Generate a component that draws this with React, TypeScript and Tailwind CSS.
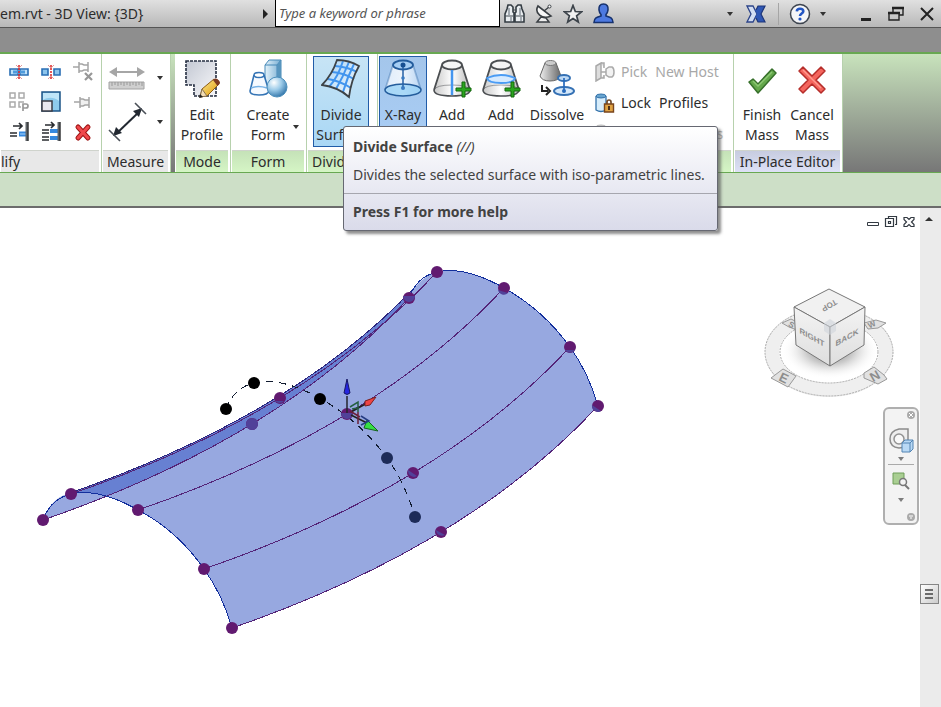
import React from "react";

interface IconProps {
  children: React.ReactNode;
  w?: number;
  h?: number;
}

const Icon = ({ children, w = 22, h = 22 }: IconProps) => (
  <svg
    width={w}
    height={h}
    viewBox={`0 0 ${w} ${h}`}
    fill="none"
    aria-hidden="true"
    className="shrink-0"
  >
    {children}
  </svg>
);

const Caret = ({ fill = "#333" }: { fill?: string }) => (
  <Icon w={8} h={6}>
    <path d="M1 1h6L4 5z" fill={fill} />
  </Icon>
);

/* ---------- title bar icons ---------- */

const Binoculars = () => (
  <Icon w={21} h={20}>
    <path
      d="M4 1h3l2 2v5l1 1v9H1v-8l2-5zM17 1h-3l-2 2v5l-1 1v9h9v-8l-2-5z"
      fill="#e9edf0"
      stroke="#333b42"
      strokeWidth="1.6"
    />
    <path d="M9 6h3M1 12h8M12 12h8" stroke="#454c53" strokeWidth="1.2" />
    <path d="M5 4v7M16 4v7M7 13v4M17 13v4" stroke="#8b939a" strokeWidth="1.5" />
  </Icon>
);

const Dish = () => (
  <Icon w={18} h={20}>
    <path d="M6 13l-4 5h12l-3-4z" fill="#eee" stroke="#3a3f44" strokeWidth="1.5" />
    <path d="M3 2C-1 9 7 16 16 12z" fill="#f7f7f7" stroke="#3a3f44" strokeWidth="1.6" />
    <path d="M9 7l5-4" stroke="#3a3f44" strokeWidth="1.5" />
    <circle cx="14.500" cy="2.500" r="1.500" fill="#fff" stroke="#3a3f44" />
  </Icon>
);

const Star = () => (
  <Icon w={20} h={20}>
    <path
      d="M10 1.500l2.300 6 6.200.3-4.900 4 1.700 6.200L10 14.500 4.700 18l1.700-6.200-4.900-4 6.200-.3z"
      fill="#f1f1f1"
      stroke="#3c434a"
      strokeWidth="1.700"
    />
  </Icon>
);

const User = () => (
  <Icon w={21} h={21}>
    <path
      d="M10.500 1C7 1 5.500 3.500 6 7c.3 2.500 1 3.500 2 4.500V13c-4 1-7 2-7 6.500h19C20 15 17 14 13 13v-1.500c1-1 1.700-2 2-4.500.5-3.500-1-6-4.500-6z"
      fill="#4d79e0"
      stroke="#17326e"
      strokeWidth="1.600"
    />
  </Icon>
);

const ExchangeLogo = () => (
  <Icon w={20} h={18}>
    <path d="M19 1h-7L8 9l4 8h7l-4-8z" fill="#2f57b4" stroke="#1d3579" strokeWidth="1.200" />
    <path d="M1 1h6l4 8-4 8H1l4-8z" fill="#d3def3" stroke="#2c4489" strokeWidth="1.300" />
    <path d="M9 5l2 4-2 4h3l2-4-2-4z" fill="#2f57b4" />
  </Icon>
);

const Help = () => (
  <Icon w={22} h={22}>
    <circle cx="11" cy="11" r="9.500" fill="#f4f5f8" stroke="#3d444f" strokeWidth="1.500" />
    <path
      d="M7.800 8.300C8 6.500 9.200 5.700 11 5.700s3.300 1 3.300 2.600c0 2.200-3.300 2.300-3.300 4.700"
      stroke="#2356c4"
      strokeWidth="2.600"
    />
    <circle cx="11" cy="16" r="1.600" fill="#2356c4" />
  </Icon>
);

/* ---------- ribbon icons ---------- */

const SplitElement = () => (
  <Icon>
    <path d="M2 8h8v6H2zM12 8h8v6h-8z" fill="#bfe0f7" stroke="#2a6fb5" strokeWidth="1.600" />
    <path d="M5 11h12" stroke="#4f9bdc" strokeWidth="3" />
    <path d="M11 4v14" stroke="#d22" strokeWidth="1.500" strokeDasharray="2 1" />
    <path d="M8 4l3 3 3-3M8 18l3-3 3 3" stroke="#e39a9a" />
  </Icon>
);

const SplitGap = () => (
  <Icon>
    <path d="M2 8h6v6H2zM14 8h6v6h-6z" fill="#8cc4ec" stroke="#2a6fb5" strokeWidth="1.600" />
    <path d="M11 4v14" stroke="#d22" strokeWidth="1.500" strokeDasharray="2 1" />
    <path d="M8 4l3 3 3-3M8 18l3-3 3 3" stroke="#e39a9a" />
  </Icon>
);

const Pin = () => (
  <Icon>
    <path d="M8 8h3l2 1h4v5h-4l-2 1H8z" fill="#f0f0f0" />
    <path
      d="M2 11h6M8 6v11M8 8h3l2 1h4M8 15h3l2-1h4M17 6v11"
      stroke="#a5a5a5"
      strokeWidth="1.500"
    />
  </Icon>
);

const Unpin = () => (
  <Icon>
    <path d="M1 6h6M7 1v11M7 3h3l2 1h4M7 10h3l2-1h4M16 1v10" stroke="#a5a5a5" strokeWidth="1.500" />
    <path d="M13 12l7 7M20 12l-7 7" stroke="#979797" strokeWidth="2.200" />
  </Icon>
);

const ArrayPattern = () => (
  <Icon>
    <path d="M2 2h5v5H2zM11 2h5v5h-5zM2 11h5v5H2zM16 11h-5v5h2" stroke="#aaa" strokeWidth="1.500" />
    <path d="M15 20v-7h3a2 2 0 010 4h-3" stroke="#999" strokeWidth="1.700" />
  </Icon>
);

const Scale = () => (
  <Icon>
    <path d="M2 1h18v19H2z" fill="#8ecbec" stroke="#1c5487" strokeWidth="1.500" />
    <path d="M3 2h16v8C14 6 8 6 3 9z" fill="#bfe5f8" />
    <path d="M2 10h10v10H2z" fill="#e8e8f0" stroke="#3c3c44" strokeWidth="1.500" />
  </Icon>
);

const TrimSingle = () => (
  <Icon>
    <path d="M5 5h9M11 2l3 3-3 3" stroke="#2a2d31" strokeWidth="1.700" />
    <path d="M2 12h7M2 15h7" stroke="#2a2d31" strokeWidth="1.500" />
    <path d="M11 13h7" stroke="#3689de" strokeWidth="5" />
    <path d="M12 13h6" stroke="#a9d6ff" />
    <path d="M19 1v19" stroke="#5d6267" strokeWidth="3" />
    <path d="M20 1v19" stroke="#222" />
  </Icon>
);

const TrimMultiple = () => (
  <Icon>
    <path d="M5 4h9M11 1l3 3-3 3" stroke="#2a2d31" strokeWidth="1.700" />
    <path d="M2 9h7M2 12h7M2 16h7M2 19h7" stroke="#2a2d31" strokeWidth="1.500" />
    <path d="M10 10h8M10 17h8" stroke="#3689de" strokeWidth="4" />
    <path d="M19 1v19" stroke="#5d6267" strokeWidth="3" />
    <path d="M20 1v19" stroke="#222" />
  </Icon>
);

const Delete = () => (
  <Icon>
    <path d="M6 6l10 11M16 6L6 17" stroke="#9e1515" strokeWidth="5" strokeLinecap="round" />
    <path d="M6 6l10 11M16 6L6 17" stroke="#f0484b" strokeWidth="3" strokeLinecap="round" />
  </Icon>
);

const MeasureLength = () => (
  <Icon w={38} h={28}>
    <path d="M3 8h32" stroke="#a6a6a6" strokeWidth="2" />
    <path d="M1 8l8-5v10zM37 8l-8-5v10z" fill="#a6a6a6" />
    <path d="M1 18h35v7H1z" fill="#cfcfcf" stroke="#a2a2a2" />
    <path d="M4 18v4M7 18v3M10 18v4M13 18v3M16 18v4M19 18v3M22 18v4M25 18v3M28 18v4M31 18v3M34 18v4" stroke="#999" />
  </Icon>
);

const AlignedDimension = () => (
  <Icon w={40} h={40}>
    <path d="M8 32L32 9" stroke="#222831" strokeWidth="2" />
    <path d="M5 34l3-9 6 6zM34 6l-3 9-6-6z" fill="#222831" />
    <path d="M1 28l11 11M27 1l11 11" stroke="#4a5058" strokeWidth="1.600" />
  </Icon>
);

const EditProfileIcon = () => (
  <Icon w={40} h={40}>
    <defs>
      <linearGradient id="profile" x1="0" y1="0" x2="1" y2="1">
        <stop offset="0" stopColor="#c3c8d3" />
        <stop offset="1" stopColor="#f8f8fa" />
      </linearGradient>
      <linearGradient id="pencil" x1="0" y1="0" x2="1" y2="1">
        <stop offset="0" stopColor="#fff09a" />
        <stop offset="1" stopColor="#dc9300" />
      </linearGradient>
    </defs>
    <path
      d="M4 2h30v35H12V26H4z"
      fill="url(#profile)"
      stroke="#262f41"
      strokeWidth="1.600"
      strokeDasharray="3 1"
    />
    <path d="M18 38l2-8L32 20l5 5-12 12z" fill="url(#pencil)" stroke="#8d5b12" />
    <path d="M18 38l2-8 5 7z" fill="#f2dcb4" stroke="#8a7350" />
    <path d="M17 39l1-4 3 3z" fill="#222" />
    <path d="M31 21l2-1.500q2-.5 4 2t0 4l-1.500 1.500z" fill="#7d3b23" />
  </Icon>
);

const CreateFormIcon = () => (
  <Icon w={40} h={40}>
    <defs>
      <radialGradient id="sphere" cx="35%" cy="28%" r="75%">
        <stop offset="0" stopColor="#fff" />
        <stop offset="0.500" stopColor="#9ccbe9" />
        <stop offset="1" stopColor="#3477ab" />
      </radialGradient>
      <linearGradient id="box">
        <stop offset="0" stopColor="#e3f2fa" />
        <stop offset="1" stopColor="#77add2" />
      </linearGradient>
    </defs>
    <path d="M17 6l4-5h12v23l-4 4H17z" fill="url(#box)" stroke="#4689b8" />
    <path d="M17 6h12l4-5M29 6v22" stroke="#4689b8" />
    <path d="M29 6l4-5v23l-4 4z" fill="#5795be" />
    <path d="M6 16q5-3 10 0l5 17q-9 6-19 0z" fill="#f5faff" fillOpacity=".95" />
    <path d="M6 16L2 32q0 4 9 4t10-4l-5-16" stroke="#3474b5" strokeWidth="1.600" />
    <ellipse cx="11" cy="16" rx="5" ry="2.500" fill="#fff" stroke="#3474b5" strokeWidth="1.500" />
    <path d="M3 29q7-3 16 0" stroke="#79b3e6" strokeWidth="1.500" />
    <circle cx="29" cy="28" r="10" fill="url(#sphere)" stroke="#4c8fbc" />
  </Icon>
);

const DivideIcon = () => (
  <Icon w={40} h={40}>
    <defs>
      <linearGradient id="grid" x1="0" y1="0" x2="1" y2="1">
        <stop offset="0" stopColor="#a9d4f5" />
        <stop offset="1" stopColor="#f2f9fe" />
      </linearGradient>
    </defs>
    <path d="M16 1Q28 1 38 7Q30 21 28 38Q17 28 1 26Q11 16 16 1z" fill="url(#grid)" />
    <path
      d="M22 2Q17 18 8 28M28 3Q22 18 15 30M33 5Q26 19 22 33M14 7q13 1 22 6M11 13q12 1 22 7M7 20q12 2 23 9"
      stroke="#4295ee"
      strokeWidth="2"
    />
    <path d="M16 1Q28 1 38 7Q30 21 28 38Q17 28 1 26Q11 16 16 1z" stroke="#3e4347" strokeWidth="1.800" />
  </Icon>
);

const Frustum = ({ stroke = "#4b4e51", mode }: { stroke?: string; mode: "xray" | "edge" | "profile" }) => (
  <Icon w={40} h={40}>
    <defs>
      <linearGradient id={`cone-${mode}`}>
        <stop offset="0" stopColor={mode === "xray" ? "#edf5ff" : "#bcbcbc"} />
        <stop offset="0.500" stopColor="#fff" />
        <stop offset="1" stopColor={mode === "xray" ? "#bdd8f5" : "#aaa"} />
      </linearGradient>
    </defs>
    <path d="M10 6L2 31q0 6 18 6t18-6L30 6z" fill={`url(#cone-${mode})`} fillOpacity=".8" />
    <path d="M10 6L2 31M30 6l8 25" stroke={stroke} strokeWidth="1.800" strokeOpacity={mode === "xray" ? "0.350" : "1"} />
    {mode === "xray" ? (
      <ellipse cx="20" cy="31" rx="18" ry="6" stroke={stroke} strokeWidth="1.500" fill="#8ecdf5" fillOpacity=".7" />
    ) : (
      <>
        <path d="M2 31q0 6 18 6t18-6" stroke={stroke} strokeWidth="1.600" />
        <path d="M2 31q2-5 18-5t18 5" stroke={stroke} strokeOpacity=".5" />
      </>
    )}
    <ellipse cx="20" cy="6" rx="10" ry="4.500" fill={mode === "xray" ? "#a5cdf3" : "#f5f5f5"} stroke={stroke} strokeWidth="1.800" />
    {mode === "xray" && (
      <>
        <path d="M20 6v24" stroke="#245fa4" strokeWidth="1.500" />
        <circle cx="20" cy="6" r="2.500" fill="#174f91" />
        <circle cx="20" cy="19" r="1.800" fill="#397ac1" />
        <circle cx="20" cy="29" r="2" fill="#397ac1" />
      </>
    )}
    {mode === "edge" && <path d="M20 11v25" stroke="#4596ef" strokeWidth="2.500" />}
    {mode === "profile" && <path d="M6 19q14-6 28 0-1 5-14 5T6 19z" fill="#d6eaff" stroke="#4b9cf4" strokeWidth="1.800" />}
    {mode !== "xray" && (
      <path d="M30 23h3v6h6v3h-6v6h-3v-6h-6v-3h6z" fill="#2aa51e" stroke="#13680c" />
    )}
  </Icon>
);

const DissolveIcon = () => (
  <Icon w={40} h={40}>
    <defs>
      <linearGradient id="dissolve">
        <stop offset="0" stopColor="#eee" />
        <stop offset="1" stopColor="#686868" />
      </linearGradient>
    </defs>
    <path d="M8 4L3 17q2 5 10 5t11-5L19 4z" fill="url(#dissolve)" stroke="#666" />
    <ellipse cx="13.500" cy="4" rx="5.500" ry="2.500" fill="#ccc" stroke="#777" />
    <path d="M5 26v6h6M9 28l4 4-4 4" stroke="#222" strokeWidth="2" />
    <ellipse cx="27" cy="19" rx="6" ry="3" fill="#bdd9f4" stroke="#3571b4" strokeWidth="2" />
    <ellipse cx="27" cy="32" rx="10" ry="4" fill="#d5e8fa" stroke="#3571b4" strokeWidth="2" />
    <path d="M27 19v13" stroke="#286bbd" strokeWidth="1.700" />
    <circle cx="27" cy="32" r="2" fill="#286bbd" />
  </Icon>
);

const PickHostIcon = () => (
  <Icon w={20} h={20}>
    <path d="M1 4l5-3v15l-5 3zM6 1h3v5M6 16h3v-3" fill="#ddd" stroke="#a9a9a9" strokeWidth="1.500" />
    <path d="M6 10h5" stroke="#aaa" strokeWidth="1.500" />
    <path d="M11 7l3-2h3q2 1 2 5t-2 5h-3l-3-2z" fill="#f2f2f2" stroke="#aaa" strokeWidth="1.500" />
  </Icon>
);

const LockIcon = ({ muted = false }: { muted?: boolean }) => (
  <Icon w={20} h={20}>
    <path d="M1 3v14q5 3 10 0V3" fill={muted ? "#ddd" : "#d7edfb"} stroke={muted ? "#bbb" : "#3472aa"} strokeWidth="1.300" />
    <ellipse cx="6" cy="3" rx="5" ry="2" fill={muted ? "#ccc" : "#67a4cf"} stroke={muted ? "#bbb" : "#3472aa"} />
    <path d="M12 11V9q0-2 2-2t2 2v2" stroke={muted ? "#aaa" : "#704b2a"} strokeWidth="1.700" />
    <path d="M9.500 11h9v8h-9z" fill={muted ? "#ccc" : "#e0a343"} stroke={muted ? "#aaa" : "#79451c"} strokeWidth="1.400" />
    <path d="M14 13v4" stroke={muted ? "#999" : "#4d3018"} strokeWidth="2" />
  </Icon>
);

const FinishIcon = () => (
  <Icon w={40} h={40}>
    <path d="M7 23l4-3 5 5L30 10l4 4-18 20z" fill="#64a84b" stroke="#37702b" strokeWidth="1.500" strokeLinejoin="round" />
    <path d="M11 22l5 5 14-14" stroke="#8cc873" strokeWidth="1.500" />
  </Icon>
);

const CancelIcon = () => (
  <Icon w={40} h={40}>
    <path
      d="M7 12l4-4 9 9 9-9 4 4-9 9 9 9-4 4-9-9-9 9-4-4 9-9z"
      fill="#f4655d"
      stroke="#b52d2a"
      strokeWidth="1.500"
      strokeLinejoin="round"
    />
    <path d="M11 11l18 18" stroke="#ff9a8e" strokeWidth="1.500" />
  </Icon>
);

/* ---------- ribbon pieces ---------- */

const tones = {
  gray: "bg-[#e8e8e8]",
  green: "bg-linear-to-b from-[#c5e2b8] to-[#d5f5c5]",
  blue: "bg-linear-to-b from-[#c7cce0] to-[#dde1f6]",
};

interface PanelProps {
  title?: string;
  tone?: keyof typeof tones;
  className?: string;
  labelClass?: string;
  children: React.ReactNode;
}

const Panel = ({ title, tone = "green", className = "", labelClass = "text-center", children }: PanelProps) => (
  <section className={`flex shrink-0 flex-col border-r border-[#b7d1ad] bg-white pr-px ${className}`}>
    <div className="flex h-24 items-start">{children}</div>
    <h2 className={`mx-px h-[22px] border-t border-[#cfd3cc] leading-[22px] whitespace-nowrap ${tones[tone]} ${labelClass}`}>
      {title}
    </h2>
  </section>
);

interface ToolProps {
  icon: React.ReactNode;
  lines: string[];
  className?: string;
  caret?: boolean;
}

const Tool = ({ icon, lines, className = "", caret = false }: ToolProps) => (
  <button
    type="button"
    className={`relative mt-0.5 flex h-[91px] shrink-0 flex-col items-center border pt-0.5 leading-5 ${className}`}
  >
    <span className="mb-1.5">{icon}</span>
    {lines.map((line) => (
      <span key={line} className="whitespace-nowrap">
        {line}
      </span>
    ))}
    {caret && (
      <span className="absolute right-1 bottom-4">
        <Caret />
      </span>
    )}
  </button>
);

const modifyTools = [
  { label: "Split Element", icon: <SplitElement /> },
  { label: "Split with Gap", icon: <SplitGap /> },
  { label: "Unpin", icon: <Unpin /> },
  { label: "Array", icon: <ArrayPattern /> },
  { label: "Scale", icon: <Scale /> },
  { label: "Pin", icon: <Pin /> },
  { label: "Trim Single", icon: <TrimSingle /> },
  { label: "Trim Multiple", icon: <TrimMultiple /> },
  { label: "Delete", icon: <Delete /> },
];

const TitleBar = () => (
  <header className="flex h-7 items-center border-b border-[#555] bg-linear-to-b from-[#e0e0e0] to-[#b8b8b8]">
    <h1 className="w-[259px] truncate">em.rvt - 3D View: {"{3D}"}</h1>
    <button type="button" aria-label="Expand search" className="w-4 pl-[3px]">
      <Icon w={8} h={12}>
        <path d="M1 1v10l5-5z" fill="#222" />
      </Icon>
    </button>
    <input
      type="text"
      aria-label="Search"
      placeholder="Type a keyword or phrase"
      className="h-[27px] w-[225px] border border-t-0 border-black bg-white px-[3px] text-[13px] italic placeholder:text-[#555] placeholder:opacity-100"
    />
    <div className="flex items-center gap-2.5 pl-1">
      <button type="button" aria-label="Find"><Binoculars /></button>
      <button type="button" aria-label="Subscription"><Dish /></button>
      <button type="button" aria-label="Favorites"><Star /></button>
      <button type="button" aria-label="Sign in"><User /></button>
    </div>
    <div className="ml-auto flex items-center pr-1.5">
      <button type="button" aria-label="Account menu"><Caret /></button>
      <button type="button" aria-label="Exchange" className="mx-3"><ExchangeLogo /></button>
      <span className="h-[22px] w-px bg-[#a5a5a5]" />
      <button type="button" aria-label="Help" className="ml-2.5"><Help /></button>
      <button type="button" aria-label="Help menu" className="ml-2 mr-8"><Caret /></button>
      <button type="button" aria-label="Minimize">
        <Icon w={14} h={16}>
          <path d="M2 12h10v3H2z" fill="#222" />
        </Icon>
      </button>
      <button type="button" aria-label="Restore" className="mx-3.5">
        <Icon w={18} h={16}>
          <path d="M6 6V2h10v7h-4M2 7h10v7H2z" stroke="#222" strokeWidth="1.400" />
          <path d="M5 2h12M1 7h12" stroke="#222" strokeWidth="2.500" />
        </Icon>
      </button>
      <button type="button" aria-label="Close">
        <Icon w={16} h={16}>
          <path d="M2 2l12 12M14 2L2 14" stroke="#222" strokeWidth="2" />
        </Icon>
      </button>
    </div>
  </header>
);

const Tooltip = () => (
  <div
    role="tooltip"
    className="absolute top-[72px] left-[343px] z-10 w-[375px] rounded-[3px] border border-[#666872] bg-linear-to-b from-white to-[#dadbea] text-[#424242] shadow-[3px_3px_3px_#555a]"
  >
    <div className="border-b border-[#a6a6ae] px-[9px] pt-1.5 pb-1">
      <p className="leading-7">
        <strong>Divide Surface</strong> <em>(//)</em>
      </p>
      <p className="leading-7 whitespace-nowrap">
        Divides the selected surface with iso-parametric lines.
      </p>
    </div>
    <p className="px-[9px] leading-9 font-bold">Press F1 for more help</p>
  </div>
);

const Ribbon = () => (
  <div className="relative flex border-t-2 border-b border-[#68a852] bg-linear-to-b from-[#c8e3bc] to-[#777]">
    <Panel title="lify" tone="gray" className="w-[102px]" labelClass="text-left">
      <div className="grid grid-cols-3 gap-x-2.5 gap-y-2 pt-[7px] pl-2">
        {modifyTools.map((tool) => (
          <button key={tool.label} type="button" aria-label={tool.label}>
            {tool.icon}
          </button>
        ))}
      </div>
    </Panel>

    <Panel title="Measure" tone="gray" className="w-[69px]">
      <div className="flex flex-col gap-2.5 pt-2.5 pl-1.5">
        <button type="button" aria-label="Measure" className="flex items-center gap-2.5">
          <MeasureLength />
          <Caret />
        </button>
        <button type="button" aria-label="Aligned Dimension" className="flex items-center gap-2">
          <AlignedDimension />
          <Caret />
        </button>
      </div>
    </Panel>

    <Panel title="Mode" className="ml-1 w-14">
      <Tool icon={<EditProfileIcon />} lines={["Edit", "Profile"]} className="w-full border-transparent" />
    </Panel>

    <Panel title="Form" className="w-[76px]">
      <Tool icon={<CreateFormIcon />} lines={["Create", "Form"]} className="w-full border-transparent" caret />
    </Panel>

    <Panel title="Divide Surface" className="w-[71px]" labelClass="pl-1">
      <Tool
        icon={<DivideIcon />}
        lines={["Divide", "Surface"]}
        className="ml-1.5 w-14 border-[#215ca8] bg-linear-to-b from-[#c7e4f5] to-[#a9d7f5]"
      />
    </Panel>

    <Panel className="w-[356px]">
      <Tool
        icon={<Frustum mode="xray" stroke="#235c9c" />}
        lines={["X-Ray"]}
        className="ml-px w-12 border-[#215ca8] bg-linear-to-b from-[#a4c6eb] to-[#a9cdf5]"
      />
      <Tool icon={<Frustum mode="edge" />} lines={["Add"]} className="w-[50px] border-transparent" />
      <Tool icon={<Frustum mode="profile" />} lines={["Add"]} className="w-12 border-transparent" />
      <Tool icon={<DissolveIcon />} lines={["Dissolve"]} className="w-16 border-transparent" />
      <ul className="flex flex-col gap-[11px] pt-2 pl-1.5 leading-5">
        <li>
          <button type="button" disabled className="flex items-center text-[#a8a8a8]">
            <PickHostIcon />
            <span className="ml-1.5">Pick</span>
            <span className="ml-2">New Host</span>
          </button>
        </li>
        <li>
          <button type="button" className="flex items-center">
            <LockIcon />
            <span className="ml-1.5">Lock</span>
            <span className="ml-2">Profiles</span>
          </button>
        </li>
        <li>
          <button type="button" disabled className="flex items-center text-[#b5b5b5]">
            <LockIcon muted />
            <span className="ml-1.5">Unlock</span>
            <span className="ml-2">Profiles</span>
          </button>
        </li>
      </ul>
    </Panel>

    <Panel title="In-Place Editor" tone="blue" className="w-[109px]">
      <Tool icon={<FinishIcon />} lines={["Finish", "Mass"]} className="ml-0.5 w-[52px] border-transparent" />
      <Tool icon={<CancelIcon />} lines={["Cancel", "Mass"]} className="w-12 border-transparent" />
    </Panel>

    <Tooltip />
  </div>
);

/* ---------- drawing area ---------- */

// node offsets along one profile, shared by both ends and the middle
const profile = [
  [0, 0],
  [28, -26],
  [95, -10],
  [161, 49],
  [189, 108],
];
const origins = [
  [43, 312],
  [252, 216],
  [409, 90],
];
const black = [
  [226, 201],
  [254, 175],
  [320, 191],
];

const SurfaceDrawing = () => (
  <svg width="640" height="440" viewBox="0 0 640 440" fill="none" role="img" aria-label="Lofted surface" className="absolute top-0 left-0">
    <g fill="#3e5fc6" fillOpacity=".543">
      <path d="M43 312C48 298 57 289 67 286Q294 208 416 78C412 82 410 86 409 90Q278 231 43 312z" />
      <path d="M67 286Q294 208 416 78C422 71 429 66 437 64C459 59 483 68 504 80C531 95 554 117 570 139C583 157 592 177 598 198Q467 339 232 420C226 399 217 379 204 361C188 338 165 316 138 302C117 290 91 281 67 286z" />
    </g>
    <g shapeRendering="crispEdges">
      {profile.map(([x, y]) => (
        <path key={x} d={`M${43 + x} ${312 + y}q235-81 366-222`} stroke="#542478" />
      ))}
      <path d="M67 286Q294 208 416 78" stroke="#2d267f" />
      <path d="M43 312c5-14 15-23 28-26 22-5 46 4 67 16 27 14 50 36 66 59 13 18 22 38 28 59" stroke="#132f9c" />
      <path d="M409 90c5-14 15-23 28-26 22-5 46 4 67 16 27 15 50 37 66 59 13 18 22 38 28 59" stroke="#132f9c" />
      <path
        d="M226 201c5-14 15-23 28-26 22-5 46 4 67 16 27 15 50 37 66 59 13 18 22 38 28 59"
        stroke="#111b30"
        strokeDasharray="7 6"
      />
    </g>
    {origins.map(([ox, oy]) =>
      profile.map(([x, y]) => (
        <circle key={`${ox}-${x}`} cx={ox + x} cy={oy + y} r="6" fill="#611a70" />
      )),
    )}
    <g fill="#514199">
      <circle cx="252" cy="216" r="6" />
      <path d="M403 88a6 6 0 0012 0zM275 193a6 6 0 009 0zM341 205a6 6 0 0012 0zM408 262a6 6 0 009 6zM498 82a6 6 0 0010 3zM565 142a6 6 0 0010 0zM592 197a6 6 0 009 6zM436 322a6 6 0 009 5z" />
    </g>
    {black.map(([x, y]) => (
      <circle key={x} cx={x} cy={y} r="6" fill="#000" />
    ))}
    <circle cx="387" cy="250" r="6" fill="#1d2b58" />
    <circle cx="415" cy="309" r="6" fill="#1d2b58" />

    {/* gizmo */}
    <path d="M347 205v-17" stroke="#25252e" strokeWidth="1.500" />
    <path d="M351 204l18-10M351 207l18 9" stroke="#222" strokeWidth="1.500" />
    <path d="M344 185l3-14 3 14q-3 3-6 0z" fill="#2525e0" stroke="#171762" />
    <path d="M365 193l11-4-6 8-5 1z" fill="#e44" stroke="#7a2020" />
    <path d="M367 212l11 11-14-3z" fill="#35e044" stroke="#176320" />
    <path d="M350 199l8-5v10M352 201l5-1" stroke="#245e40" strokeWidth="1.500" />
    <path d="M350 203l10 6M358 204v12" stroke="#6c213b" strokeWidth="1.500" />
    <path d="M361 208l8 5-8 4" stroke="#253c82" strokeWidth="1.500" />
  </svg>
);

const ViewCube = () => (
  <svg width="136" height="120" viewBox="0 0 136 120" fill="none" role="img" aria-label="View cube" className="absolute top-[77px] right-[22px]">
    <defs>
      <radialGradient id="cubeShadow">
        <stop offset="0" stopColor="#777" />
        <stop offset="0.500" stopColor="#ccc" />
        <stop offset="1" stopColor="#fff" stopOpacity="0" />
      </radialGradient>
      <linearGradient id="cubeFace" x1="0" y1="0" x2="0" y2="1">
        <stop offset="0" stopColor="#f3f3f3" />
        <stop offset="1" stopColor="#dedede" />
      </linearGradient>
    </defs>
    <ellipse cx="67" cy="67" rx="57" ry="38" stroke="#efefef" strokeWidth="14" />
    <ellipse cx="67" cy="67" rx="64" ry="44" stroke="#aaa" strokeDasharray="2 1" />
    <ellipse cx="67" cy="67" rx="49" ry="31" stroke="#aaa" strokeDasharray="2 1" />
    <ellipse cx="68" cy="65" rx="48" ry="29" fill="url(#cubeShadow)" />
    <g fill="#e1e1e1" stroke="#999">
      <path d="M9 93l12-9 13 7-8 11zM102 88l10-6 10 8 3 4-9 5-14-6zM20 38l9-4 6 3v8l-8-3zM102 38l12-3 10 3-8 5-10 1z" />
    </g>
    <g fill="#f1f1f1" stroke="#777">
      <path d="M32 22L67 4l36 18-35 20z" />
      <path d="M32 22l36 20v39L34 60z" fill="url(#cubeFace)" />
      <path d="M68 42l35-20-1 38-34 21z" fill="url(#cubeFace)" />
    </g>
    <path d="M62 38l6-4 6 4v8l-6 4-6-4z" fill="#cfd4da" fillOpacity=".6" />
    <g fill="#8d8d8d" fontFamily="Liberation Sans, sans-serif" fontWeight="bold" textAnchor="middle">
      <text fontSize="8" transform="translate(50 55) skewY(29)">RIGHT</text>
      <text fontSize="8" transform="translate(85 55) skewY(-29)">BACK</text>
      <text fontSize="8" transform="translate(66 18) rotate(150)">TOP</text>
      <text fontSize="13" transform="translate(20 97) rotate(25)">E</text>
      <text fontSize="13" transform="translate(115 95) rotate(-30)">N</text>
      <text fontSize="8" transform="translate(28 42) rotate(30)">S</text>
      <text fontSize="8" transform="translate(111 42) rotate(-25)">W</text>
    </g>
  </svg>
);

const NavigationBar = () => (
  <nav
    aria-label="Navigation"
    className="absolute top-[199px] right-px flex h-[118px] w-9 flex-col items-center rounded-md border-2 border-[#afafaf] bg-[#f3f3f3]"
  >
    <button type="button" aria-label="Close navigation bar" className="mt-px self-end">
      <Icon w={11} h={10}>
        <circle cx="5" cy="5" r="4" fill="#aaa" />
        <path d="M3 3l4 4M7 3L3 7" stroke="#fff" />
      </Icon>
    </button>
    <button type="button" aria-label="Steering wheel" className="mt-2">
      <Icon w={26} h={26}>
        <path d="M11 1h9v12q-2 7-9 7Q2 19 2 11T11 1z" fill="#eee" stroke="#8c8c8c" strokeWidth="1.500" />
        <circle cx="11" cy="11" r="5" fill="#f8f8f8" stroke="#929292" strokeWidth="1.500" />
        <path d="M14 15l3-3h8v9l-3 3h-8z" fill="#b9d9f5" stroke="#5384b3" />
        <path d="M14 15h8l3-3M22 15v9" stroke="#5384b3" />
      </Icon>
    </button>
    <span className="mt-0.5"><Caret fill="#7d7d7d" /></span>
    <span className="mt-0.5 mb-1 h-px w-[26px] shrink-0 bg-[#aaa]" />
    <button type="button" aria-label="Zoom" className="mt-0.5">
      <Icon w={20} h={20}>
        <path d="M2 2h11v11H2z" fill="#a9ce92" stroke="#6e9e58" />
        <circle cx="12" cy="11" r="3.500" fill="#f3f3f3" stroke="#777" strokeWidth="1.500" />
        <path d="M14 14l4 4" stroke="#777" strokeWidth="2" />
      </Icon>
    </button>
    <span className="mt-1.5"><Caret fill="#7d7d7d" /></span>
    <button type="button" aria-label="Navigation options" className="mt-auto self-end">
      <Icon w={11} h={11}>
        <circle cx="5" cy="5" r="4" fill="#aaa" />
        <path d="M3 4h4M4 6h2" stroke="#fff" />
      </Icon>
    </button>
  </nav>
);

const Viewport = () => (
  <main className="flex min-h-[499px] flex-1 bg-white">
    <div className="relative flex-1">
      <SurfaceDrawing />
      <div className="flex justify-end gap-1 pt-[7px] pr-1">
        <button type="button" aria-label="Minimize view">
          <Icon w={14} h={14}>
            <path d="M1.500 7.500h11v3h-11z" stroke="#333a42" />
          </Icon>
        </button>
        <button type="button" aria-label="Restore view">
          <Icon w={14} h={14}>
            <path d="M4.500 3V1.500h8v8H11M1.500 3.500h8v8h-8zM4.500 6.500h2v2h-2z" stroke="#333a42" strokeWidth="1.200" />
          </Icon>
        </button>
        <button type="button" aria-label="Close view">
          <Icon w={14} h={14}>
            <path d="M2 2.500h3l2 2 2-2h3v2L9.500 7l2.500 2.500v2H9l-2-2-2 2H2v-2L4.500 7 2 4.500z" stroke="#333a42" strokeWidth="1.200" />
          </Icon>
        </button>
      </div>
      <ViewCube />
      <NavigationBar />
    </div>
    <aside className="flex w-[21px] flex-col items-center bg-[#ebebeb] pt-2">
      <button type="button" aria-label="Scroll up" className="pr-1">
        <Icon w={10} h={6}>
          <path d="M1 5l4-4 4 4z" fill="#333" />
        </Icon>
      </button>
      <button
        type="button"
        aria-label="Scroll thumb"
        className="mt-[362px] mr-0.5 flex h-5 w-[19px] items-center justify-center border border-[#858585] bg-linear-to-br from-white to-[#ccc]"
      >
        <Icon w={11} h={12}>
          <path d="M1 2h8M1 6h8M1 10h8" stroke="#444" strokeWidth="1.500" />
        </Icon>
      </button>
    </aside>
  </main>
);

const App = () => {
  return (
    <div className="flex min-h-screen flex-col overflow-x-hidden font-['Noto_Sans','Open_Sans',sans-serif] text-[14px] text-[#2c2c2c]">
      <TitleBar />
      <div className="h-6 bg-[#8e8e8e]" />
      <Ribbon />
      <div className="h-[35px] border-b-2 border-[#6c6c6c] bg-[#cddfc7]" />
      <Viewport />
    </div>
  );
};

export default App;
